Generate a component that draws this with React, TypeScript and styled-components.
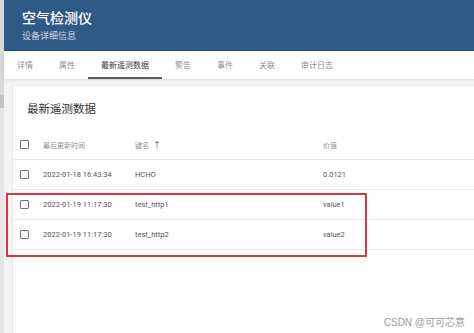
import styled, { createGlobalStyle } from "styled-components";

const GlobalStyle = createGlobalStyle`
  html, body {
    margin: 0;
    padding: 0;
    background: #ffffff;
  }
  body {
    font-family: Roboto, "Noto Sans CJK SC", sans-serif;
    overflow: hidden;
  }
`;

const Page = styled.div`
  position: relative;
  display: flex;
  width: 474px;
  height: 333px;
  overflow: hidden;
`;

const SideStrip = styled.div`
  width: 4px;
  flex: none;
  background: linear-gradient(
    to bottom,
    #d9d9d9 0,
    #d9d9d9 95px,
    #c4c4c4 95px,
    #c4c4c4 108px,
    #e6e6e6 108px,
    #e6e6e6 100%
  );
`;

const Main = styled.div`
  flex: 1;
  display: flex;
  flex-direction: column;
  min-width: 0;
`;

const Header = styled.header`
  height: 51px;
  background: #2e5a87;
  border-bottom: 1px solid #24486d;
  padding: 10px 0 0 18px;
  box-sizing: border-box;
  color: #ffffff;
`;

const Title = styled.h1`
  margin: 0;
  font-size: 14px;
  font-weight: 500;
  line-height: 16px;
`;

const Subtitle = styled.div`
  margin-top: 5px;
  font-size: 9px;
  line-height: 11px;
  color: #cbd7e5;
`;

const TabBar = styled.nav`
  position: relative;
  z-index: 1;
  display: flex;
  height: 28px;
  background: #ffffff;
  box-shadow: 0 1px 2px rgba(0, 0, 0, 0.12);
`;

const Tab = styled.div<{ $active?: boolean }>`
  display: flex;
  align-items: center;
  padding: 0 13px;
  font-size: 8px;
  color: ${(p) => (p.$active ? "#3a3a3a" : "#8f8f8f")};
  border-bottom: 2px solid ${(p) => (p.$active ? "#5a5f66" : "transparent")};
  box-sizing: border-box;
`;

const Content = styled.div`
  flex: 1;
  background: #f4f4f4;
  padding: 6px 0 0 8px;
  display: flex;
`;

const Card = styled.section`
  flex: 1;
  background: #ffffff;
  border-left: 1px solid #e6e6e6;
  border-top: 1px solid #ececec;
`;

const CardTitle = styled.h2`
  margin: 0;
  padding: 15px 0 0 14px;
  height: 44px;
  box-sizing: border-box;
  font-size: 11.5px;
  font-weight: 400;
  color: #333333;
  line-height: 16px;
`;

const Row = styled.div<{ $head?: boolean }>`
  display: grid;
  grid-template-columns: 30px 92px 188px 1fr;
  align-items: center;
  height: 29px;
  border-bottom: 1px solid #e9e9e9;
  font-size: ${(p) => (p.$head ? "7px" : "7.5px")};
  color: ${(p) => (p.$head ? "#8f8f8f" : "#555555")};
`;

const Check = styled.span`
  display: block;
  width: 7px;
  height: 7px;
  margin-left: 7px;
  border: 1.3px solid #747474;
  border-radius: 1px;
`;

const Cell = styled.span`
  white-space: nowrap;
`;

const SortArrow = styled.span`
  margin-left: 4px;
  font-size: 8px;
  color: #555;
`;

const Highlight = styled.div`
  position: absolute;
  left: 6px;
  top: 193px;
  width: 357px;
  height: 60px;
  border: 2px solid #d8393f;
  pointer-events: none;
`;

const Watermark = styled.div`
  position: absolute;
  right: 9px;
  bottom: 4px;
  font-size: 10px;
  color: #9a9a9a;
  font-family: "Liberation Sans", "Noto Sans CJK SC", sans-serif;
`;

const tabs = ["详情", "属性", "最新遥测数据", "警告", "事件", "关联", "审计日志"];

const rows = [
  { time: "2022-01-18 16:43:34", key: "HCHO", value: "0.0121" },
  { time: "2022-01-19 11:17:30", key: "test_http1", value: "value1" },
  { time: "2022-01-19 11:17:30", key: "test_http2", value: "value2" },
];

export default function App() {
  return (
    <>
      <GlobalStyle />
      <Page>
        <SideStrip />
        <Main>
          <Header>
            <Title>空气检测仪</Title>
            <Subtitle>设备详细信息</Subtitle>
          </Header>
          <TabBar>
            {tabs.map((t) => (
              <Tab key={t} $active={t === "最新遥测数据"}>
                {t}
              </Tab>
            ))}
          </TabBar>
          <Content>
            <Card>
              <CardTitle>最新遥测数据</CardTitle>
              <Row $head>
                <Check />
                <Cell>最后更新时间</Cell>
                <Cell>
                  键名
                  <SortArrow>↑</SortArrow>
                </Cell>
                <Cell>价值</Cell>
              </Row>
              {rows.map((r) => (
                <Row key={r.key}>
                  <Check />
                  <Cell>{r.time}</Cell>
                  <Cell>{r.key}</Cell>
                  <Cell>{r.value}</Cell>
                </Row>
              ))}
            </Card>
          </Content>
        </Main>
        <Highlight />
        <Watermark>CSDN @可可芯意</Watermark>
      </Page>
    </>
  );
}
